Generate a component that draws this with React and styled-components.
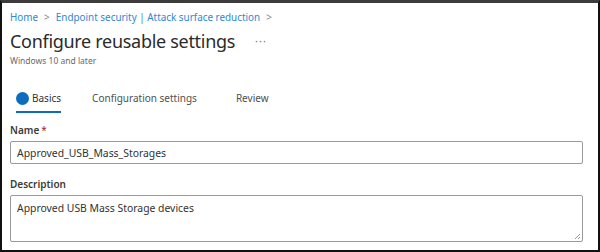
import styled, { createGlobalStyle } from "styled-components";

const GlobalStyle = createGlobalStyle`
  body {
    margin: 0;
    background: #fff;
    font-family: "Segoe UI", "Noto Sans", "Open Sans", sans-serif;
  }
`;

const Frame = styled.div`
  width: 600px;
  height: 252px;
  box-sizing: border-box;
  border-top: 3px solid #3c3c3c;
  border-left: 2px solid #111;
  border-right: 2px solid #111;
  border-bottom: 2px solid #111;
  padding: 7px 15px 0 8px;
  overflow: hidden;
`;

const Breadcrumb = styled.nav`
  display: flex;
  align-items: center;
  gap: 6px;
  font-size: 9.9px;
  line-height: 14px;
  height: 14px;
`;

const Crumb = styled.span`
  color: #2f86d6;
`;

const Chevron = styled.span`
  color: #8a8a8a;
  font-size: 10px;
`;

const TitleRow = styled.div`
  display: flex;
  align-items: center;
  gap: 20px;
  margin-top: 4px;
`;

const Title = styled.h1`
  margin: 0;
  font-size: 18px;
  font-weight: 400;
  letter-spacing: -0.3px;
  color: #2b2b2b;
  line-height: 26px;
`;

const More = styled.span`
  color: #777;
  font-size: 11px;
  letter-spacing: 1px;
  margin-top: -2px;
`;

const Subtitle = styled.div`
  font-size: 8.5px;
  color: #6a6a6a;
  line-height: 12px;
  margin-top: 1px;
`;

const Tabs = styled.div`
  display: flex;
  align-items: flex-end;
  margin-top: 22px;
  padding-left: 6px;
`;

const Tab = styled.div`
  display: flex;
  align-items: center;
  gap: 3px;
  height: 24px;
  padding-bottom: 4px;
  margin-left: ${(p) => p.$gap || 0}px;
  font-size: 10px;
  color: ${(p) => (p.$active ? "#323232" : "#505050")};
  border-bottom: 2px solid ${(p) => (p.$active ? "#0f6cbd" : "transparent")};
  box-sizing: border-box;
`;

const Dot = styled.span`
  width: 13px;
  height: 13px;
  border-radius: 50%;
  background: #0f6cbd;
`;

const Field = styled.div`
  display: flex;
  flex-direction: column;
  gap: 4px;
  margin-top: ${(p) => p.$top}px;
`;

const Label = styled.label`
  font-size: 10px;
  font-weight: 600;
  color: #3a3a3a;
  line-height: 14px;
`;

const Required = styled.span`
  color: #a4262c;
  font-weight: 400;
  margin-left: 2px;
`;

const Input = styled.div`
  height: 23px;
  box-sizing: border-box;
  border: 1.5px solid #9a9a9a;
  border-radius: 2px;
  padding: 0 6px;
  display: flex;
  align-items: center;
  font-size: 10.4px;
  color: #323232;
`;

const TextArea = styled.div`
  position: relative;
  height: 47px;
  box-sizing: border-box;
  border: 1.5px solid #9a9a9a;
  border-radius: 2px;
  padding: 5px 6px;
  font-size: 10.4px;
  color: #323232;
  line-height: 14px;
`;

const Grip = styled.svg`
  position: absolute;
  right: 1px;
  bottom: 1px;
`;

export default function App() {
  return (
    <>
      <GlobalStyle />
      <Frame>
        <Breadcrumb>
          <Crumb>Home</Crumb>
          <Chevron>&gt;</Chevron>
          <Crumb>Endpoint security | Attack surface reduction</Crumb>
          <Chevron>&gt;</Chevron>
        </Breadcrumb>
        <TitleRow>
          <Title>Configure reusable settings</Title>
          <More>···</More>
        </TitleRow>
        <Subtitle>Windows 10 and later</Subtitle>
        <Tabs>
          <Tab $active>
            <Dot />
            Basics
          </Tab>
          <Tab $gap={31}>Configuration settings</Tab>
          <Tab $gap={39}>Review</Tab>
        </Tabs>
        <Field $top={10}>
          <Label>
            Name<Required>*</Required>
          </Label>
          <Input>Approved_USB_Mass_Storages</Input>
        </Field>
        <Field $top={13}>
          <Label>Description</Label>
          <TextArea>
            Approved USB Mass Storage devices
            <Grip width="7" height="7" viewBox="0 0 7 7">
              <path d="M6 1 L1 6 M6 4 L4 6" stroke="#999" strokeWidth="1" />
            </Grip>
          </TextArea>
        </Field>
      </Frame>
    </>
  );
}
